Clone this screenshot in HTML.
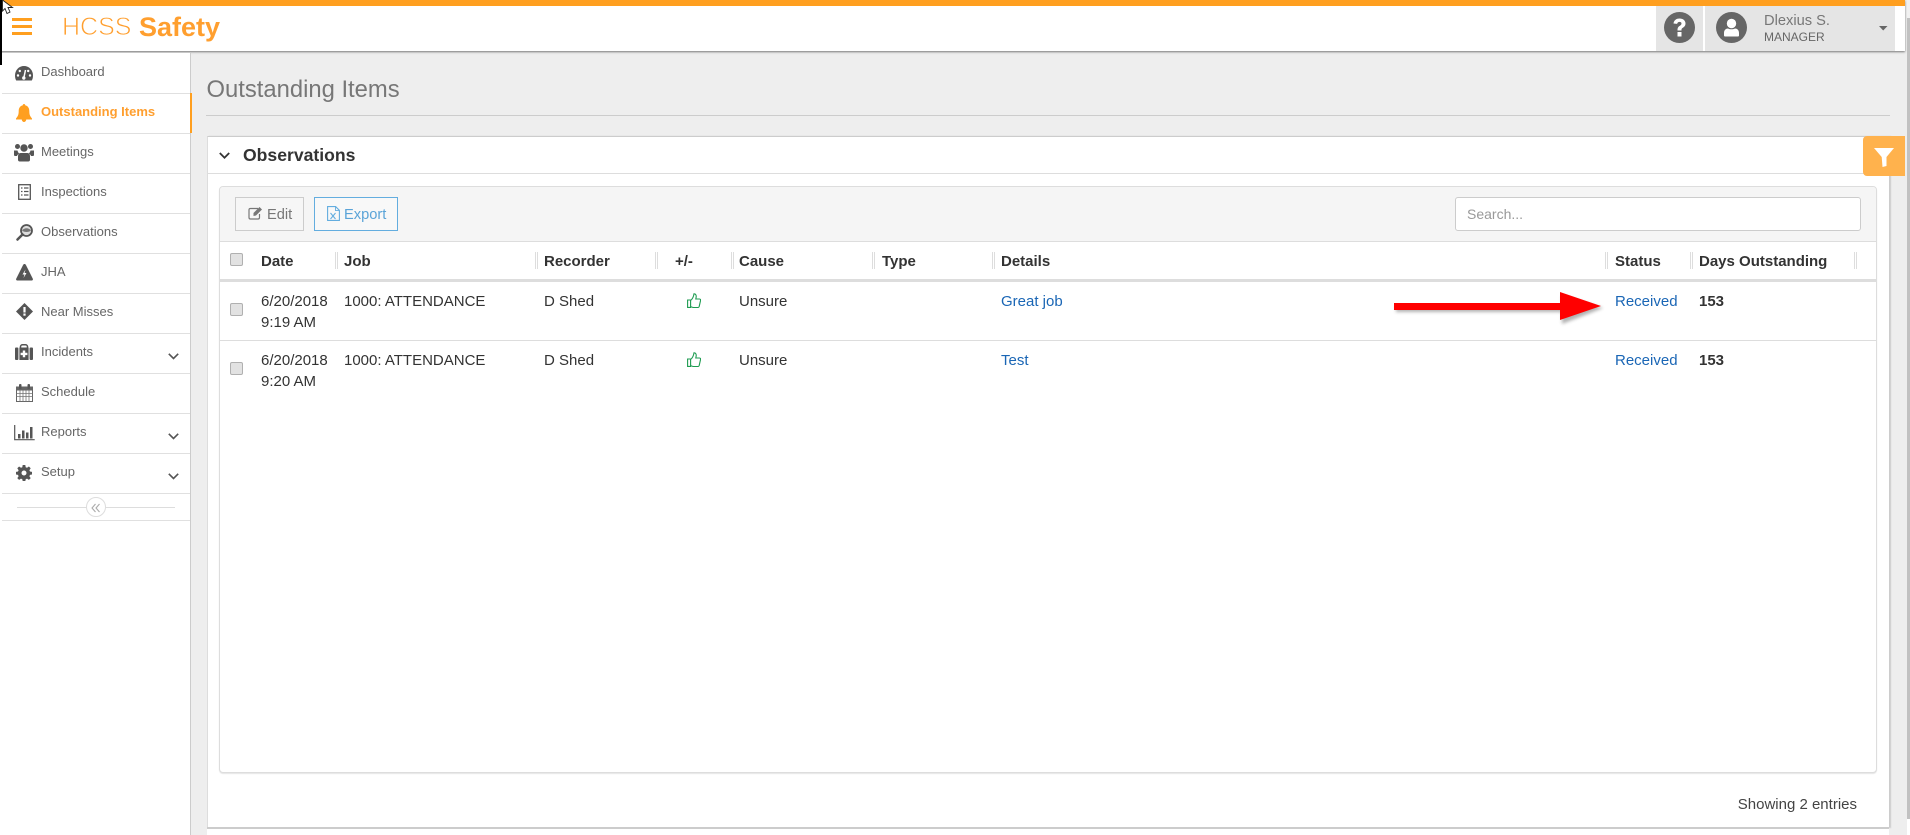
<!DOCTYPE html>
<html><head><meta charset="utf-8"><title>HCSS Safety</title>
<style>
html,body{margin:0;padding:0;width:1910px;height:835px;overflow:hidden;background:#eee;font-family:"Liberation Sans",Arial,sans-serif;color:#333}
div,span,svg{position:absolute;display:block}
.t{white-space:nowrap;line-height:20px;font-size:15px;margin-top:1px}
.z{margin-top:0}
.b{font-weight:bold}
.n{font-size:13px;color:#666;left:41px}
.l{color:#1a66b5}
.ln{height:1px;background:#e0e0e0}
.cb{width:11px;height:11px;background:#e2e2e2;border:1px solid #b0b0b0;border-radius:2px}
.sep{width:3px;height:17px;top:252px;border-left:1px solid #ddd;border-right:1px solid #ddd;box-sizing:border-box}
.ch{fill:none;stroke:#555;stroke-width:1.6}
</style></head><body>
<!-- header -->
<div style="left:0;top:0;width:1905px;height:51px;background:#fff;box-shadow:0 1px 2px #777"></div>
<div style="left:0;top:0;width:1905px;height:6px;background:#ff9f1f"></div>
<div style="left:12px;top:18px;width:20px;height:3px;background:#ff9f1f"></div>
<div style="left:12px;top:25px;width:20px;height:3px;background:#ff9f1f"></div>
<div style="left:12px;top:32px;width:20px;height:3px;background:#ff9f1f"></div>
<div class="t z" style="left:62px;top:12px;font-size:25px;line-height:30px;color:#ff9f2f;-webkit-text-stroke:.8px #fff">HCSS</div>
<div class="t z b" style="left:139px;top:12px;font-size:27px;line-height:30px;color:#ff9f2f">Safety</div>
<div style="left:1656px;top:6px;width:47px;height:45px;background:#e5e5e5"></div>
<div style="left:1705px;top:6px;width:190px;height:45px;background:#e5e5e5"></div>
<svg style="left:1664px;top:12px" width="31" height="31" viewBox="0 0 31 31"><circle cx="15.500" cy="15.500" r="15.500" fill="#666"/><path d="M9.500 11.500C10 8 12.500 6.500 15.500 6.500c3.500 0 6 2 6 5 0 2.500-1.500 3.500-3 4.500-1 .7-1 1-1 2.500h-4c0-2.500.5-3.500 2-4.500 1.200-.8 2-1.300 2-2.500 0-1-.8-1.600-2-1.600-1.300 0-2 .8-2.400 2z" fill="#fff"/><rect x="13.500" y="20" width="4" height="4.500" fill="#fff"/></svg>
<svg style="left:1716px;top:12px" width="31" height="31" viewBox="0 0 31 31"><circle cx="15.500" cy="15.500" r="15.500" fill="#666"/><circle cx="15.500" cy="11.500" r="4.700" fill="#fff"/><path d="M8 23.500v-2.500c0-3 2-4.500 4-4.500 2 1 5 1 7 0 2 0 4 1.500 4 4.500v2.500q0 1-1 1H9q-1 0-1-1z" fill="#fff"/></svg>
<div class="t z" style="left:1764px;top:11px;color:#777;font-size:14.67px">Dlexius S.</div>
<div class="t z" style="left:1764px;top:27px;font-size:12px;color:#666">MANAGER</div>
<svg style="left:1879px;top:26px" width="9" height="5"><path d="M0 0h8.500L4.200 4.500z" fill="#666"/></svg>
<!-- cursor & black bar -->
<div style="left:0;top:0;width:2px;height:65px;background:#000"></div>
<svg style="left:2px;top:0" width="12" height="20"><path d="M.5 0 .5 11 3 8.500l2 5 3-1.500-2-4.500h4.500z" fill="#fff" stroke="#222" stroke-width=".9"/></svg>
<!-- scrollbar -->
<div style="left:1907px;top:0;width:3px;height:18px;background:#f1f1f1"></div>
<div style="left:1907px;top:18px;width:3px;height:801px;background:#c1c1c1"></div>
<div style="left:1907px;top:819px;width:3px;height:16px;background:#fff"></div>
<!-- sidebar -->
<div style="left:2px;top:53px;width:188px;height:782px;background:#fff;border-right:1px solid #ccc"></div>
<div style="left:0;top:65px;width:2px;height:770px;background:#fff"></div>
<div class="ln" style="left:2px;top:93px;width:188px"></div>
<div class="ln" style="left:2px;top:133px;width:188px"></div>
<div class="ln" style="left:2px;top:173px;width:188px"></div>
<div class="ln" style="left:2px;top:213px;width:188px"></div>
<div class="ln" style="left:2px;top:253px;width:188px"></div>
<div class="ln" style="left:2px;top:293px;width:188px"></div>
<div class="ln" style="left:2px;top:333px;width:188px"></div>
<div class="ln" style="left:2px;top:373px;width:188px"></div>
<div class="ln" style="left:2px;top:413px;width:188px"></div>
<div class="ln" style="left:2px;top:453px;width:188px"></div>
<div class="ln" style="left:2px;top:493px;width:188px"></div>
<div class="ln" style="left:2px;top:520px;width:188px"></div>
<div style="left:190px;top:93px;width:2px;height:40px;background:#ff9f1f"></div>
<div class="t n" style="top:61px">Dashboard</div>
<div class="t n b" style="top:101px;color:#ff9f2f">Outstanding Items</div>
<div class="t n" style="top:141px">Meetings</div>
<div class="t n" style="top:181px">Inspections</div>
<div class="t n" style="top:221px">Observations</div>
<div class="t n" style="top:261px">JHA</div>
<div class="t n" style="top:301px">Near Misses</div>
<div class="t n" style="top:341px">Incidents</div>
<div class="t n" style="top:381px">Schedule</div>
<div class="t n" style="top:421px">Reports</div>
<div class="t n" style="top:461px">Setup</div>
<!-- sidebar icons -->
<svg style="left:15px;top:65px" width="18" height="16" viewBox="0 0 18 16"><path d="M1.200 15.500C.4 14 0 12.500 0 10.500 0 5 4 1 9 1s9 4 9 9.500c0 2-.4 3.500-1.200 5z" fill="#555"/><g fill="#fff"><circle cx="3" cy="10.500" r="1.200"/><circle cx="4.800" cy="6" r="1.200"/><circle cx="13.200" cy="6" r="1.200"/><circle cx="15" cy="10.500" r="1.200"/><circle cx="8.800" cy="13" r="1.700"/></g><path d="M8.800 13 10.500 5" stroke="#fff" stroke-width="1.500"/></svg>
<svg style="left:16px;top:104px" width="16" height="18" viewBox="0 0 16 18"><path d="M8 0c.8 0 1.200.5 1.200 1.300C12 2 13.300 4.300 13.300 7c0 4 1 5.500 2.700 7.500V15.500H0v-1C1.700 12.500 2.700 11 2.700 7c0-2.700 1.300-5 4.100-5.700C6.800.5 7.200 0 8 0z" fill="#ff9f1f"/><path d="M5.800 15.500h4.400c0 1.300-1 2.500-2.200 2.500s-2.200-1.200-2.200-2.500z" fill="#ff9f1f"/></svg>
<svg style="left:14px;top:143px" width="20" height="19" viewBox="0 0 20 19" fill="#555"><circle cx="3.500" cy="3.500" r="2.500"/><circle cx="16.500" cy="3.500" r="2.500"/><circle cx="10" cy="5" r="3.700"/><path d="M0 7.500h3.500c.3 1.500 1 2.500 1.800 3.200C4 11 3.300 12 3 13H1c-.7 0-1-.5-1-1.200z"/><path d="M20 7.500h-3.500c-.3 1.500-1 2.500-1.800 3.200 1.300.3 2 1.300 2.300 2.300h2c.7 0 1-.5 1-1.200z"/><path d="M6.500 10h7c1.500 0 2.500 1.500 2.500 3.500v3.300c0 1-.7 1.700-1.700 1.700H5.700c-1 0-1.700-.7-1.700-1.700v-3.300C4 11.500 5 10 6.500 10z"/></svg>
<svg style="left:18px;top:184px" width="13" height="16" viewBox="0 0 13 16"><rect x=".7" y=".7" width="11.600" height="14.600" fill="#fff" stroke="#555" stroke-width="1.300"/><path d="M3 4h1.500M6 4h4.500M3 7.500h1.500M6 7.500h4.500M3 11h1.500M6 11h4.500" stroke="#555" stroke-width="1.200"/></svg>
<svg style="left:16px;top:224px" width="17" height="17" viewBox="0 0 17 17"><circle cx="10.500" cy="6.500" r="5.500" fill="#ddd" stroke="#555" stroke-width="1.800"/><path d="M6 6.500c2-3 7-3 9 0-2 2-7 2-9 0z" fill="#777"/><path d="M6.500 10.500 1.500 15.500" stroke="#555" stroke-width="2.500" stroke-linecap="round"/></svg>
<svg style="left:16px;top:264px" width="17" height="17" viewBox="0 0 17 17"><path d="M8.500 0c.6 0 1 .3 1.300.8l7 14c.4.900-.1 1.700-1 1.700H1.200c-.9 0-1.400-.8-1-1.700l7-14C7.500.3 7.900 0 8.500 0z" fill="#555"/><path d="M9.500 5.500 6.500 10.500h2l-1 3.500 3-5h-2z" fill="#fff"/></svg>
<svg style="left:16px;top:303px" width="17" height="17" viewBox="0 0 17 17"><path d="M8.500 0 17 8.500 8.500 17 0 8.500z" fill="#555"/><rect x="7.400" y="4" width="2.200" height="5.500" fill="#fff"/><rect x="7.400" y="10.500" width="2.200" height="2.200" fill="#fff"/></svg>
<svg style="left:15px;top:344px" width="18" height="16" viewBox="0 0 18 16"><path d="M5.500 4V2.500C5.500 1.500 6.500.8 7.500.8h3c1 0 2 .7 2 1.700V4" fill="none" stroke="#555" stroke-width="1.500"/><rect x="0" y="3.500" width="3.400" height="12.500" rx="1" fill="#555"/><rect x="4.400" y="3.500" width="9.200" height="12.500" fill="#555"/><rect x="14.600" y="3.500" width="3.400" height="12.500" rx="1" fill="#555"/><path d="M7.800 6.500h2.400v2.200h2.200v2.400h-2.200v2.200H7.800v-2.200H5.600V8.700h2.200z" fill="#fff"/></svg>
<svg style="left:16px;top:384px" width="17" height="18" viewBox="0 0 17 18"><rect x=".5" y="3" width="16" height="14.500" fill="#fff" stroke="#666"/><rect x=".5" y="3" width="16" height="3.500" fill="#666"/><path d="M.5 9.500h16M.5 12.500h16M4 6.500v11M7 6.500v11M10 6.500v11M13 6.500v11" stroke="#777" stroke-width=".8"/><rect x="3" y="0" width="2.500" height="5" rx="1" fill="#555"/><rect x="11.500" y="0" width="2.500" height="5" rx="1" fill="#555"/></svg>
<svg style="left:14px;top:425px" width="21" height="16" viewBox="0 0 21 16"><path d="M.7 0v14.700h20" fill="none" stroke="#555" stroke-width="1.200"/><g fill="#555"><rect x="4" y="9" width="2.500" height="4.500"/><rect x="8" y="5.500" width="2.500" height="8"/><rect x="12" y="7.500" width="2.500" height="6"/><rect x="16" y="2" width="2.500" height="11.500"/></g></svg>
<svg style="left:16px;top:465px" width="16" height="16" viewBox="0 0 16 16"><path d="M6.700 0h2.600l.4 2.200 1.300.6 1.900-1.300 1.800 1.800-1.300 1.900.6 1.300 2 .4v2.600l-2 .4-.6 1.300 1.300 1.900-1.800 1.800-1.900-1.300-1.300.6-.4 2H6.700l-.4-2-1.300-.6-1.900 1.300-1.800-1.800 1.300-1.900-.6-1.300-2-.4V6.900l2-.4.6-1.300L1.300 3.300l1.800-1.800L5 2.800l1.300-.6z" fill="#555"/><circle cx="8" cy="8" r="2.500" fill="#fff"/></svg>
<svg class="ch" style="left:168px;top:353px" width="11" height="7"><path d="M.8.800 5.500 5.500 10.200.8"/></svg>
<svg class="ch" style="left:168px;top:433px" width="11" height="7"><path d="M.8.800 5.500 5.500 10.200.8"/></svg>
<svg class="ch" style="left:168px;top:473px" width="11" height="7"><path d="M.8.800 5.500 5.500 10.200.8"/></svg>
<div style="left:17px;top:507px;width:158px;height:1px;background:#ddd"></div>
<div style="left:86px;top:497px;width:18px;height:18px;border:1px solid #ddd;border-radius:50%;background:#fff"></div>
<svg style="left:91px;top:503px" width="10" height="10"><path d="M4.500 1 1 5l3.500 4M8.500 1 5 5l3.500 4" fill="none" stroke="#aaa" stroke-width="1.100"/></svg>
<!-- title -->
<div class="t" style="left:206.500px;top:74px;font-size:23.8px;line-height:30px;color:#777">Outstanding Items</div>
<div style="left:206px;top:115px;width:1684px;height:1px;background:#ccc"></div>
<!-- panel -->
<div style="left:206.500px;top:136px;width:1682.500px;height:692px;background:#fff;border-top:1px solid #ccc;border-left:1px solid #ddd;box-sizing:border-box;box-shadow:2px 0 1px #ccc"></div>
<div style="left:208px;top:173px;width:1681px;height:1px;background:#ddd"></div>
<div style="left:207px;top:827px;width:1682px;height:2px;background:#ccc"></div>
<div style="left:207px;top:829px;width:1682px;height:6px;background:#fff"></div>
<svg class="ch" style="left:219px;top:152px" width="11" height="8" ><path d="M.8 1 5.500 5.700 10.200 1" stroke="#333" stroke-width="1.800"/></svg>
<div class="t z b" style="left:243px;top:145px;font-size:17.6px;line-height:20px">Observations</div>
<!-- filter -->
<div style="left:1863px;top:136px;width:42px;height:40px;background:#ffb24d;border-radius:4px 0 0 4px"></div>
<svg style="left:1874px;top:148px" width="20" height="20"><path d="M0 0h20l-7.500 9v9l-4 1-.8-10z" fill="#fff"/></svg>
<!-- inner -->
<div style="left:219px;top:186px;width:1658px;height:587px;box-sizing:border-box;background:#fff;border:1px solid #ddd;border-radius:4px;box-shadow:0 1px 1px #e5e5e5"></div>
<div style="left:220px;top:187px;width:1656px;height:54px;background:#f5f5f5;border-bottom:1px solid #ddd;border-radius:3px 3px 0 0"></div>
<div style="left:235px;top:197px;width:69px;height:34px;box-sizing:border-box;border:1px solid #ccc;background:#f6f6f6"></div>
<svg style="left:248px;top:206px" width="15" height="14" viewBox="0 0 15 14"><path d="M10 2.500H2.500Q1 2.500 1 4v7.500Q1 13 2.500 13h7.500q1.500 0 1.500-1.500V8" fill="none" stroke="#777" stroke-width="1.200"/><path d="M5.500 7 11.500 1 14 3.500 8 9.500 5.500 10z" fill="#777"/></svg>
<div class="t" style="left:267px;top:204px;color:#777;font-size:14.67px">Edit</div>
<div style="left:314px;top:197px;width:84px;height:34px;box-sizing:border-box;border:1px solid #63addf;background:#f8f8f8"></div>
<svg style="left:327px;top:206px" width="13" height="15" viewBox="0 0 13 15"><path d="M.6.600h8l3.800 3.800v10H.6z" fill="none" stroke="#63addf" stroke-width="1.100"/><path d="M8.500.600v4h4" fill="none" stroke="#63addf" stroke-width=".9"/><path d="M3.500 7 8.500 13M8.500 7 3.500 13" stroke="#63addf" stroke-width="1.100"/></svg>
<div class="t" style="left:344px;top:204px;color:#5ba4d8;font-size:14.67px">Export</div>
<div style="left:1455px;top:197px;width:406px;height:34px;box-sizing:border-box;border:1px solid #ccc;border-radius:3px;background:#fff"></div>
<div class="t z" style="left:1467px;top:204px;font-size:14px;color:#999">Search...</div>
<!-- table head -->
<div class="cb" style="left:230px;top:253px"></div>
<div class="t b" style="left:261px;top:251px">Date</div>
<div class="t b" style="left:344px;top:251px">Job</div>
<div class="t b" style="left:544px;top:251px">Recorder</div>
<div class="t b" style="left:675px;top:251px">+/-</div>
<div class="t b" style="left:739px;top:251px">Cause</div>
<div class="t b" style="left:882px;top:251px">Type</div>
<div class="t b" style="left:1001px;top:251px">Details</div>
<div class="t b" style="left:1615px;top:251px">Status</div>
<div class="t b" style="left:1699px;top:251px">Days Outstanding</div>
<div class="sep" style="left:335px"></div>
<div class="sep" style="left:535px"></div>
<div class="sep" style="left:655px"></div>
<div class="sep" style="left:731px"></div>
<div class="sep" style="left:872px"></div>
<div class="sep" style="left:992px"></div>
<div class="sep" style="left:1605px"></div>
<div class="sep" style="left:1690px"></div>
<div class="sep" style="left:1854px"></div>
<div style="left:220px;top:279px;width:1656px;height:3px;background:#ddd"></div>
<div style="left:220px;top:340px;width:1656px;height:1px;background:#ddd"></div>
<!-- rows -->
<div class="cb" style="left:230px;top:303px"></div>
<div class="t" style="left:261px;top:291px">6/20/2018</div>
<div class="t" style="left:261px;top:312px">9:19 AM</div>
<div class="t" style="left:344px;top:291px">1000: ATTENDANCE</div>
<div class="t" style="left:544px;top:291px">D Shed</div>
<div class="t" style="left:739px;top:291px">Unsure</div>
<div class="t l" style="left:1001px;top:291px">Great job</div>
<div class="t l" style="left:1615px;top:291px">Received</div>
<div class="t b" style="left:1699px;top:291px">153</div>
<div class="cb" style="left:230px;top:362px"></div>
<div class="t" style="left:261px;top:350px">6/20/2018</div>
<div class="t" style="left:261px;top:371px">9:20 AM</div>
<div class="t" style="left:344px;top:350px">1000: ATTENDANCE</div>
<div class="t" style="left:544px;top:350px">D Shed</div>
<div class="t" style="left:739px;top:350px">Unsure</div>
<div class="t l" style="left:1001px;top:350px">Test</div>
<div class="t l" style="left:1615px;top:350px">Received</div>
<div class="t b" style="left:1699px;top:350px">153</div>
<svg style="left:687px;top:293px" width="14" height="15" viewBox="0 0 14 15"><path d="M.6 7h3v7.400h-3zM3.600 7.500C5.500 6 6.500 4 7 .8c1.800 0 2.300 1.500 2.200 3L8.800 6h3.700c1 0 1.300.8 1 1.700l-1.300 5.800c-.2.700-.7 1-1.400 1H6.500c-1 0-2-.5-2.900-1" fill="none" stroke="#1d9b50" stroke-width="1.100"/></svg>
<svg style="left:687px;top:352px" width="14" height="15" viewBox="0 0 14 15"><path d="M.6 7h3v7.400h-3zM3.600 7.500C5.500 6 6.500 4 7 .8c1.800 0 2.300 1.500 2.200 3L8.800 6h3.700c1 0 1.300.8 1 1.700l-1.300 5.800c-.2.700-.7 1-1.400 1H6.500c-1 0-2-.5-2.900-1" fill="none" stroke="#1d9b50" stroke-width="1.100"/></svg>
<!-- arrow -->
<svg style="left:1390px;top:288px" width="220" height="40"><path d="M5 17H171V6L212 18 171 34V22H5z" fill="#555" opacity=".45" transform="translate(1 2)" style="filter:blur(1.500px)"/><path d="M4 15H170V4L211 18 170 32V22H4z" fill="#f00"/></svg>
<div class="t" style="left:1857px;top:794px;transform:translateX(-100%);color:#444">Showing 2 entries</div>
</body></html>
